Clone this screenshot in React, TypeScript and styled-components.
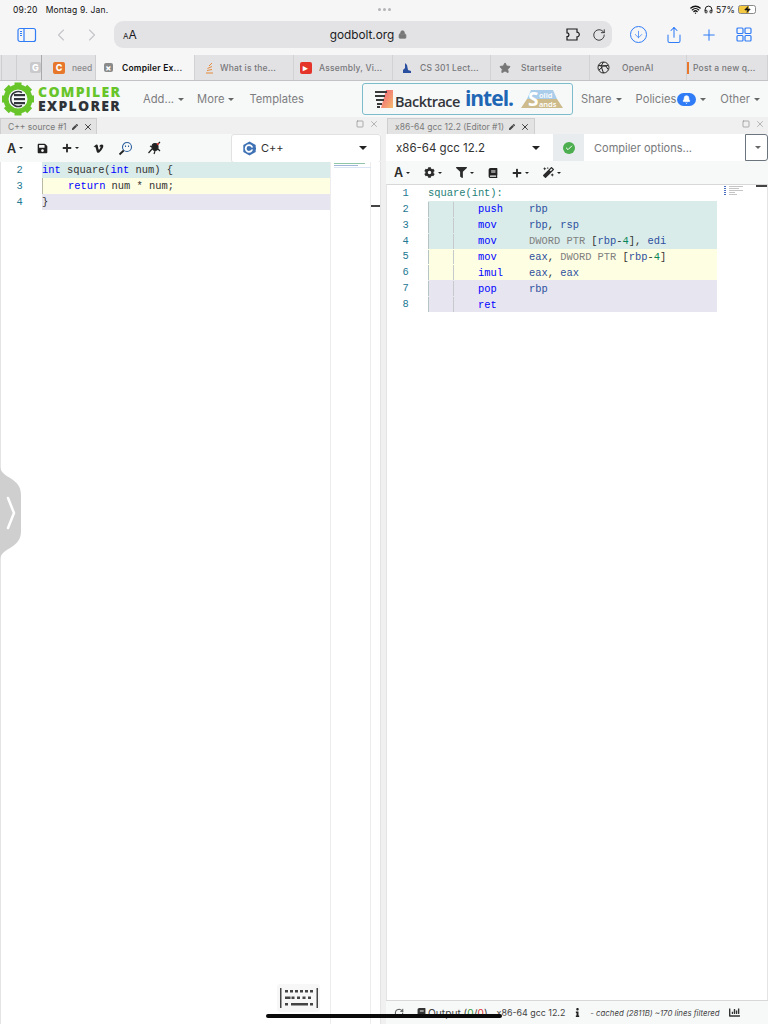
import React from "react";
import styled, { createGlobalStyle } from "styled-components";
import {
  ChevronLeft,
  ChevronRight,
  Lock,
  RotateCw,
  ArrowDown,
  Share,
  Plus,
  Star,
  X,
  Square,
  Check,
  Headphones,
  Wifi,
  Zap,
  Bell,
} from "lucide-react";
import {
  FaBook,
  FaChartBar,
  FaCog,
  FaFilter,
  FaInfo,
  FaMagic,
  FaPen,
  FaPlus,
  FaSave,
  FaVimeoV,
} from "react-icons/fa";

const GlobalStyle = createGlobalStyle`
  html, body { margin: 0; padding: 0; background: #fff; }
  * { box-sizing: border-box; }
`;

const Page = styled.div`
  position: relative;
  width: 768px;
  height: 1024px;
  overflow: hidden;
  display: flex;
  flex-direction: column;
  background: #f6f6f7;
  font-family: Inter, "Liberation Sans", sans-serif;
`;

/* ---------- ipad chrome ---------- */
const StatusBar = styled.div`
  height: 18px;
  display: flex;
  align-items: center;
  padding: 1px 0 0 13px;
  font-size: 8.5px;
  color: #111;
  letter-spacing: 0.2px;
`;
const StatusDate = styled.span`
  margin-left: 8px;
`;
const Dots = styled.div`
  margin-left: 270px;
  display: flex;
  gap: 2px;
  & i {
    width: 3px;
    height: 3px;
    border-radius: 50%;
    background: #b4b4b8;
  }
`;
const StatusRight = styled.div`
  margin-left: auto;
  display: flex;
  align-items: center;
  gap: 3px;
  padding-right: 12px;
`;
const Battery = styled.div`
  width: 18px;
  height: 9px;
  border: 1px solid #888;
  border-radius: 2.5px;
  background: linear-gradient(90deg, #f5c842 62%, #fff 62%);
  display: flex;
  align-items: center;
  justify-content: center;
`;
const Toolbar = styled.div`
  height: 37px;
  display: flex;
  align-items: center;
  padding: 0 16px 4px 17px;
`;
const NavArrows = styled.div`
  display: flex;
  gap: 11px;
  margin-left: 14px;
  color: #c6c6ca;
`;
const AddressBar = styled.div`
  width: 498px;
  height: 27px;
  flex: none;
  margin-left: 12px;
  border-radius: 9px;
  background: #e3e3e5;
  display: grid;
  grid-template-columns: 1fr auto 1fr;
  align-items: center;
  padding: 0 6px 0 9px;
  color: #1c1c1e;
`;
const ReaderA = styled.span`
  font-size: 12px;
  & small {
    font-size: 8px;
  }
`;
const Domain = styled.span`
  display: flex;
  align-items: center;
  gap: 4px;
  margin-left: 8px;
  font-size: 11.8px;
`;
const AddressEnd = styled.div`
  display: flex;
  justify-content: flex-end;
  align-items: center;
  gap: 9px;
`;
const ToolActions = styled.div`
  display: flex;
  align-items: center;
  gap: 17.5px;
  margin-left: 18px;
  color: #2f7cf6;
`;
const DownloadRing = styled.div`
  width: 17px;
  height: 17px;
  border: 1.2px solid #2f7cf6;
  border-radius: 50%;
  display: flex;
  align-items: center;
  justify-content: center;
`;
const TabStrip = styled.div`
  height: 26px;
  display: flex;
  background: #e2e2e4;
  border-bottom: 1px solid #c3c3c5;
`;
const Stub = styled.div<{ $w: number; $dark?: boolean }>`
  width: ${(p) => p.$w}px;
  flex: none;
  display: flex;
  align-items: center;
  gap: 7px;
  padding-left: ${(p) => (p.$w > 30 ? 11 : 0)}px;
  border-right: 1px solid ${(p) => (p.$dark ? "#a9a9ab" : "#cfcfd1")};
  font-size: 8.5px;
  font-weight: 500;
  color: #8a8a8c;
  justify-content: ${(p) => (p.$w === 25 ? "flex-end" : "flex-start")};
`;
const Tab = styled.div<{ $w: number; $active?: boolean; $gap?: number; $pad?: number }>`
  width: ${(p) => p.$w}px;
  flex: none;
  display: flex;
  align-items: center;
  gap: ${(p) => p.$gap ?? 9}px;
  padding-left: ${(p) => p.$pad ?? 8}px;
  border-right: 1px solid #d2d2d4;
  background: ${(p) => (p.$active ? "#f6f6f7" : "transparent")};
  font-size: 8.5px;
  font-weight: ${(p) => (p.$active ? 600 : 500)};
  letter-spacing: 0.2px;
  color: ${(p) => (p.$active ? "#111" : "#77777a")};
  white-space: nowrap;
`;
const Favicon = styled.div<{ $bg: string; $size?: number }>`
  width: ${(p) => p.$size ?? 12}px;
  height: ${(p) => p.$size ?? 12}px;
  flex: none;
  border-radius: 2px;
  background: ${(p) => p.$bg};
  color: #fff;
  font-size: 9px;
  font-weight: 800;
  display: flex;
  align-items: center;
  justify-content: center;
`;
const TabEdgeMark = styled.i`
  width: 2px;
  height: 12px;
  flex: none;
  margin-left: -8px;
  background: #e6772b;
`;

/* ---------- compiler explorer nav ---------- */
const Nav = styled.div`
  height: 36px;
  flex: none;
  display: flex;
  align-items: center;
  background: #f7f9f9;
  padding-left: 2px;
  font-size: 11.2px;
  color: #7d7d7f;
`;
const Logo = styled.div`
  display: flex;
  align-items: center;
  gap: 4px;
  width: 141px;
`;
const LogoText = styled.div`
  font-family: "Open Sans", "Liberation Sans", sans-serif;
  font-weight: 800;
  font-size: 14px;
  letter-spacing: 1.3px;
  color: #2f3338;
  white-space: nowrap;
`;
const LogoLine = styled.div<{ $green?: boolean }>`
  height: 14px;
  line-height: 14px;
  color: ${(p) => (p.$green ? "#67c52a" : "#2f3338")};
`;
const NavItem = styled.span<{ $left?: number }>`
  display: inline-flex;
  align-items: center;
  margin-left: ${(p) => p.$left ?? 0}px;
  white-space: nowrap;
`;
const Caret = styled.i<{ $size?: number; $dark?: boolean }>`
  display: inline-block;
  width: 0;
  height: 0;
  margin-left: ${(p) => (p.$size ? 3 : 4)}px;
  border-left: ${(p) => p.$size ?? 3}px solid transparent;
  border-right: ${(p) => p.$size ?? 3}px solid transparent;
  border-top: ${(p) => p.$size ?? 3}px solid ${(p) => (p.$dark ? "#222" : "#666")};
`;
const Sponsors = styled.div`
  width: 211px;
  height: 32px;
  flex: none;
  margin-left: 58px;
  margin-right: 8px;
  border: 1px solid #7dbccb;
  border-radius: 3px;
  display: flex;
  align-items: center;
  padding-left: 11px;
`;
const BacktraceWord = styled.span`
  margin-left: 1px;
  margin-top: 4px;
  font-family: "Open Sans", "Liberation Sans", sans-serif;
  font-size: 14.5px;
  font-weight: 600;
  letter-spacing: -0.5px;
  color: #33353a;
`;
const IntelWord = styled.span`
  margin-left: 5px;
  margin-top: -3px;
  font-family: "Open Sans", "Liberation Sans", sans-serif;
  font-size: 21px;
  font-weight: 700;
  letter-spacing: -1px;
  color: #1f67b5;
`;
const BellBadge = styled.span`
  width: 19px;
  height: 13px;
  margin-left: 1px;
  border-radius: 7px;
  background: #2f7cf6;
  color: #fff;
  display: inline-flex;
  align-items: center;
  justify-content: center;
`;

/* ---------- panes ---------- */
const Panes = styled.div`
  flex: 1;
  min-height: 0;
  display: flex;
  gap: 5px;
  background: #f0f0f0;
`;
const Pane = styled.div<{ $w: number }>`
  width: ${(p) => p.$w}px;
  flex: none;
  display: flex;
  flex-direction: column;
`;
const TabRow = styled.div`
  height: 17px;
  flex: none;
  display: flex;
  justify-content: space-between;
  align-items: flex-end;
`;
const PaneTab = styled.div<{ $w: number; $left?: number }>`
  width: ${(p) => p.$w}px;
  height: 16px;
  margin-left: ${(p) => p.$left ?? 0}px;
  display: flex;
  align-items: center;
  gap: 5px;
  padding-left: 7px;
  background: #e3e3e3;
  border: 1px solid #cfcfcf;
  border-bottom: none;
  font-size: 8.5px;
  color: #7a7a7a;
  white-space: nowrap;
`;
const WindowIcons = styled.div<{ $right: number }>`
  display: flex;
  align-items: center;
  gap: 5px;
  padding: 0 ${(p) => p.$right}px 5px 0;
  color: #8a8a8a;
`;
const ToolRow = styled.div<{ $h: number }>`
  height: ${(p) => p.$h}px;
  flex: none;
  display: flex;
  align-items: center;
  background: #f7f9f9;
  color: #2b2b2b;
`;
const ToolGroup = styled.div<{ $gap: number; $left: number }>`
  display: flex;
  align-items: center;
  gap: ${(p) => p.$gap}px;
  margin-left: ${(p) => p.$left}px;
`;
const ToolBtn = styled.span`
  display: inline-flex;
  align-items: center;
  font-size: 12.5px;
  font-weight: 600;
  color: #2b2b2b;
`;
const LangSelect = styled.div`
  width: 150px;
  height: 29px;
  margin-left: auto;
  display: flex;
  align-items: center;
  padding: 0 13px 0 10px;
  background: #fff;
  border: 1px solid #e2e2e2;
  border-radius: 3px;
  font-size: 11px;
  color: #333;
`;
const SelectText = styled.span`
  margin-left: 4px;
  flex: 1;
`;
const CompilerSelect = styled.div`
  width: 167px;
  height: 100%;
  display: flex;
  align-items: center;
  justify-content: space-between;
  padding: 0 13px 0 10px;
  background: #fff;
  font-size: 11.5px;
  color: #333;
`;
const StatusCell = styled.div`
  width: 31px;
  height: 100%;
  display: flex;
  align-items: center;
  justify-content: center;
  background: #e9ecef;
`;
const OkDot = styled.div`
  width: 12px;
  height: 12px;
  border-radius: 50%;
  background: #4cae4f;
  color: #fff;
  display: flex;
  align-items: center;
  justify-content: center;
`;
const OptionsInput = styled.div`
  width: 161px;
  height: 100%;
  display: flex;
  align-items: center;
  padding-left: 10px;
  background: #fff;
  font-size: 11px;
  color: #77797c;
`;
const OptionsCaret = styled.div`
  flex: 1;
  height: 100%;
  display: flex;
  align-items: center;
  justify-content: center;
  background: #fff;
  border: 1px solid #6c757d;
  border-radius: 0 3px 3px 0;
`;
const EditorBody = styled.div<{ $border?: boolean }>`
  flex: 1;
  min-height: 0;
  display: flex;
  background: #fff;
  border-top: ${(p) => (p.$border ? "1px solid #d8d8d8" : "none")};
  border-left: 1px solid #e4e4e4;
  border-right: 1px solid #e4e4e4;
`;
const CodeArea = styled.div<{ $w: number }>`
  width: ${(p) => p.$w}px;
  flex: none;
  font-family: "Liberation Mono", "DejaVu Sans Mono", monospace;
  font-size: 10.4px;
  color: #333;
`;
const Line = styled.div`
  height: 15.875px;
  display: flex;
  align-items: center;
`;
const LineNo = styled.span`
  width: 41px;
  flex: none;
  padding-right: 4px;
  text-align: center;
  color: #237893;
`;
const LineCode = styled.span<{ $bg?: string; $mark?: boolean }>`
  flex: 1;
  height: 100%;
  display: flex;
  align-items: center;
  padding-top: 1px;
  background: ${(p) => p.$bg ?? "transparent"};
  border-left: ${(p) => (p.$mark ? "1px solid #b9b9a5" : "none")};
  & > span {
    white-space: pre;
  }
`;
const Mnemonic = styled.span`
  width: 51px;
  margin-left: 24px;
  flex: none;
  color: #0000ff;
`;
const AsmGuide = styled.i`
  width: 26px;
  height: 100%;
  flex: none;
  border-left: 1px solid #b7c4c6;
  border-right: 1px solid #c7cacd;
`;
const Kw = styled.span`
  color: #0000ff;
`;
const Reg = styled.span`
  color: #2d4f9e;
`;
const Mem = styled.span`
  color: #808080;
`;
const Label = styled.span`
  color: #267f78;
`;
const Num = styled.span`
  color: #098658;
`;
const Minimap = styled.div<{ $w: number; $plain?: boolean }>`
  width: ${(p) => p.$w}px;
  flex: none;
  display: flex;
  flex-direction: column;
  gap: 1px;
  padding-top: 1px;
  border-left: ${(p) => (p.$plain ? "none" : "1px solid #ededed")};
  border-right: ${(p) => (p.$plain ? "none" : "1px solid #ededed")};
`;
const MiniLine = styled.div<{ $w: number; $c: string }>`
  width: ${(p) => p.$w}px;
  height: 1px;
  margin-left: 3px;
  background: ${(p) => p.$c};
`;
const MiniRow = styled.div`
  display: flex;
  align-items: center;
  height: 1px;
  margin-left: 7px;
  & i {
    width: 2px;
    height: 1px;
    background: #4a6fc0;
  }
`;
const ScrollCol = styled.div<{ $top: number }>`
  flex: 1;
  padding-top: ${(p) => p.$top}px;
  & i {
    display: block;
    height: 1.5px;
    background: #444;
  }
`;
const StatusFooter = styled.div`
  height: 24px;
  flex: none;
  display: flex;
  align-items: center;
  padding-left: 8px;
  background: #f7f9f9;
  border-top: 1px solid #d8d8d8;
  font-size: 8.9px;
  color: #444;
  white-space: nowrap;
`;
const OutputLabel = styled.span`
  display: inline-flex;
  align-items: center;
  gap: 2px;
  margin-left: 13px;
  font-size: 10.2px;
  & em {
    font-style: normal;
  }
`;
const FooterNote = styled.span`
  margin-left: 8px;
  font-size: 7.8px;
  font-style: italic;
  color: #444;
`;

/* ---------- overlays ---------- */
const SideHandle = styled.div`
  position: absolute;
  left: 0;
  top: 467px;
  width: 22px;
  height: 92px;
`;
const KeyboardKey = styled.div`
  position: absolute;
  left: 277px;
  top: 984px;
  width: 43px;
  height: 28px;
  background: #f7f7f7;
  border-radius: 3px;
  display: flex;
  align-items: center;
  justify-content: center;
`;
const HomeBar = styled.div`
  position: absolute;
  left: 266px;
  top: 1014px;
  width: 236px;
  height: 4px;
  border-radius: 2px;
  background: #0a0a0a;
`;

const GearLogo = () => (
  <svg width="32" height="34" viewBox="0 0 32 34">
    <circle cx="16" cy="17" r="12" fill="none" stroke="#67c52a" strokeWidth="5" />
    {[0, 45, 90, 135, 180, 225, 270, 315].map((a) => (
      <rect key={a} x="12.5" y="0.5" width="7" height="5" fill="#67c52a" transform={`rotate(${a} 16 17)`} />
    ))}
    <path d="M20 10.5A7.5 7.5 0 1 0 20 23.5" fill="none" stroke="#33373b" strokeWidth="1.5" />
    <rect x="12" y="12" width="11" height="2.2" fill="#33373b" />
    <rect x="12" y="16" width="11" height="2.2" fill="#33373b" />
    <rect x="12" y="20" width="11" height="2.2" fill="#33373b" />
  </svg>
);

const BacktraceMark = () => (
  <svg width="20" height="19" viewBox="0 0 20 19">
    <defs>
      <linearGradient id="bt" x1="0" y1="0" x2="1" y2="1">
        <stop offset="0" stopColor="#ee5c7c" />
        <stop offset="1" stopColor="#f7bb6b" />
      </linearGradient>
    </defs>
    <path d="M12 0h7v18H7z" fill="url(#bt)" />
    <path d="M1 1h12v2H1zM1 5h10v2H1zM2 9h8v2H2zM3 13h5v2H3zM3 16h3v2H3z" fill="#3a3a3a" />
  </svg>
);

const SolidSands = () => (
  <svg width="46" height="30" viewBox="0 -5 46 30" style={{ marginLeft: 6 }}>
    <path d="M8 10L12 1h22l4 9z" fill="#a9cdea" />
    <path d="M8 10h30l6 9H2z" fill="#cdbb8c" />
    <text x="9" y="17" fontFamily="Open Sans" fontSize="19" fontWeight="700" fill="#fff">S</text>
    <text x="20" y="9" fontFamily="Open Sans" fontSize="7.5" fontWeight="600" fill="#fff">olid</text>
    <text x="20" y="17.5" fontFamily="Open Sans" fontSize="7.5" fontWeight="600" fill="#fff">ands</text>
  </svg>
);

const SidebarIcon = () => (
  <svg width="20" height="16" viewBox="0 0 20 16" fill="none" stroke="#2f7cf6" strokeWidth="1.2">
    <rect x="1" y="1.5" width="17.5" height="13" rx="2" />
    <path d="M7 1.5v13" />
    <path d="M3 4.5h2M3 6.5h2M3 8.5h2" strokeWidth="1" />
  </svg>
);

const TabsIcon = () => (
  <svg width="16" height="15" viewBox="0 0 16 15" fill="none" stroke="#2f7cf6" strokeWidth="1.2">
    <rect x="1" y="1" width="6" height="5.5" rx="1" />
    <rect x="9" y="1" width="6" height="5.5" rx="1" />
    <rect x="1" y="8.5" width="6" height="5.5" rx="1" />
    <rect x="9" y="8.5" width="6" height="5.5" rx="1" />
  </svg>
);

const PuzzleIcon = () => (
  <svg width="17" height="13" viewBox="0 0 17 13" fill="none" stroke="#1c1c1e" strokeWidth="1.2">
    <path d="M1 1h10v3.2a1.8 1.8 0 1 1 0 4.6V12H1V8.6a1.6 1.6 0 1 0 0-3.8z" />
  </svg>
);

const ChatGptIcon = () => (
  <svg width="13" height="13" viewBox="0 0 13 13" fill="none" stroke="#222" strokeWidth="1">
    <circle cx="6.5" cy="6.5" r="5.5" />
    <path d="M6.5 1L4 5l2.5 7M1.5 4.5L9 5l2 3.5M2 9l4.5-4 4.5-.5" />
  </svg>
);

const CppBadge = () => (
  <svg width="15" height="15" viewBox="0 0 15 15">
    <path d="M7.5.5l6.2 3.5v7l-6.2 3.5L1.3 11V4z" fill="#3f72b5" />
    <circle cx="7" cy="7.5" r="3.3" fill="none" stroke="#fff" strokeWidth="1.8" />
    <path d="M9 6.5h5v2H9z" fill="#3f72b5" />
  </svg>
);

const ZoomFace = () => (
  <svg width="15" height="15" viewBox="0 0 15 15" fill="none" stroke="#2b5f9e" strokeWidth="1.1">
    <circle cx="9" cy="6" r="4.5" />
    <path d="M5.7 9.5L1.5 13.5" strokeWidth="1.8" stroke="#222" />
    <path d="M7.5 4.5v1.5M10.5 4.5v1.5" />
  </svg>
);

const BugIcon = () => (
  <svg width="15" height="14" viewBox="0 0 15 14" fill="none" stroke="#222" strokeWidth="1.2">
    <ellipse cx="8" cy="6" rx="3" ry="3.5" fill="#222" />
    <path d="M5 8L1.5 12M3 5l2 1M11 3l2-2M11 8l2 2M8 10l-1 3" />
    <circle cx="11" cy="3" r="1" fill="#d33" stroke="none" />
  </svg>
);

const KeyboardGlyph = () => (
  <svg width="38" height="20" viewBox="0 0 38 20" fill="#444">
    <rect x="0" y="0" width="1.5" height="20" />
    <rect x="36.5" y="0" width="1.5" height="20" />
    {[0, 1, 2, 3, 4, 5].map((i) => (
      <rect key={`a${i}`} x={5 + i * 5} y="2" width="3" height="2.5" />
    ))}
    {[0, 1, 2, 3, 4].map((i) => (
      <rect key={`b${i}`} x={i === 0 ? 5 : 6 + i * 5.5} y="8.5" width={i === 0 ? 5.5 : 3} height="2.5" />
    ))}
    <rect x="5" y="15" width="3" height="2.5" />
    <rect x="11" y="15" width="17" height="2.5" />
    <rect x="30" y="15" width="3" height="2.5" />
  </svg>
);

const ToolCaret = () => <Caret $size={2.5} $dark />;

const asmLines = [
  { n: 2, bg: "#d9ecea", m: "push", ops: <Reg>rbp</Reg> },
  {
    n: 3,
    bg: "#d9ecea",
    m: "mov",
    ops: (
      <>
        <Reg>rbp</Reg>, <Reg>rsp</Reg>
      </>
    ),
  },
  {
    n: 4,
    bg: "#d9ecea",
    m: "mov",
    ops: (
      <>
        <Mem>DWORD PTR</Mem> [<Reg>rbp</Reg>-<Num>4</Num>], <Reg>edi</Reg>
      </>
    ),
  },
  {
    n: 5,
    bg: "#fefee3",
    m: "mov",
    ops: (
      <>
        <Reg>eax</Reg>, <Mem>DWORD PTR</Mem> [<Reg>rbp</Reg>-<Num>4</Num>]
      </>
    ),
  },
  {
    n: 6,
    bg: "#fefee3",
    m: "imul",
    ops: (
      <>
        <Reg>eax</Reg>, <Reg>eax</Reg>
      </>
    ),
  },
  { n: 7, bg: "#e6e5f0", m: "pop", ops: <Reg>rbp</Reg> },
  { n: 8, bg: "#e6e5f0", m: "ret", ops: null },
];

const App = () => {
  return (
    <Page>
      <GlobalStyle />
      <StatusBar>
        <span>09:20</span>
        <StatusDate>Montag 9. Jan.</StatusDate>
        <Dots>
          <i />
          <i />
          <i />
        </Dots>
        <StatusRight>
          <Wifi size={11} strokeWidth={3} color="#111" />
          <Headphones size={9} strokeWidth={2.5} color="#111" />
          <span>57%</span>
          <Battery>
            <Zap size={7} fill="#111" color="#111" />
          </Battery>
        </StatusRight>
      </StatusBar>

      <Toolbar>
        <SidebarIcon />
        <NavArrows>
          <ChevronLeft size={20} strokeWidth={1.4} />
          <ChevronRight size={20} strokeWidth={1.4} />
        </NavArrows>
        <AddressBar>
          <ReaderA>
            <small>A</small>A
          </ReaderA>
          <Domain>
            godbolt.org <Lock size={9} fill="#777" color="#777" />
          </Domain>
          <AddressEnd>
            <PuzzleIcon />
            <RotateCw size={14} strokeWidth={1.4} color="#1c1c1e" />
          </AddressEnd>
        </AddressBar>
        <ToolActions>
          <DownloadRing>
            <ArrowDown size={11} strokeWidth={1.6} />
          </DownloadRing>
          <Share size={18} strokeWidth={1.4} />
          <Plus size={18} strokeWidth={1.4} />
          <TabsIcon />
        </ToolActions>
      </Toolbar>

      <TabStrip>
        <Stub $w={2} />
        <Stub $w={15} />
        <Stub $w={25} $dark>
          <Favicon $bg="#c9c9cb" $size={11}>G</Favicon>
        </Stub>
        <Stub $w={54}>
          <Favicon $bg="#e6772b">C</Favicon>
          need
        </Stub>
        <Tab $w={99} $active $gap={9}>
          <Favicon $bg="#8a8a8a" $size={9}>×</Favicon>
          Compiler Ex...
        </Tab>
        <Tab $w={99} $gap={5}>
          <Favicon $bg="transparent" $size={12}>
            <svg width="11" height="12" viewBox="0 0 11 12" fill="none" stroke="#e58a3c" strokeWidth="1">
              <path d="M2 11h7M3 8.5l5-1M3.5 6.5l4.5-2M5 4l3-3" />
            </svg>
          </Favicon>
          What is the...
        </Tab>
        <Tab $w={99} $gap={7} $pad={6}>
          <Favicon $bg="#e5342a" $size={12}>▸</Favicon>
          Assembly, Vi...
        </Tab>
        <Tab $w={98} $gap={7} $pad={8}>
          <Favicon $bg="transparent" $size={12}>
            <svg width="11" height="12" viewBox="0 0 11 12" fill="#2a4f9e">
              <path d="M3 1l2 2 1 5 3 1v2H1V8l2-2z" />
            </svg>
          </Favicon>
          CS 301 Lect...
        </Tab>
        <Tab $w={99} $gap={10}>
          <Star size={12} fill="#777" color="#777" />
          Startseite
        </Tab>
        <Tab $w={97} $gap={12} $pad={7}>
          <ChatGptIcon />
          OpenAI
        </Tab>
        <Tab $w={81} $gap={4}>
          <TabEdgeMark />
          Post a new q...
        </Tab>
      </TabStrip>

      <Nav>
        <Logo>
          <GearLogo />
          <LogoText>
            <LogoLine $green>COMPILER</LogoLine>
            <LogoLine>EXPLORER</LogoLine>
          </LogoText>
        </Logo>
        <NavItem>
          Add...
          <Caret />
        </NavItem>
        <NavItem $left={13}>
          More
          <Caret />
        </NavItem>
        <NavItem $left={15}>Templates</NavItem>
        <Sponsors>
          <BacktraceMark />
          <BacktraceWord>Backtrace</BacktraceWord>
          <IntelWord>intel.</IntelWord>
          <SolidSands />
        </Sponsors>
        <NavItem>
          Share
          <Caret />
        </NavItem>
        <NavItem $left={14}>
          Policies
          <BellBadge>
            <Bell size={9} fill="#fff" />
          </BellBadge>
          <Caret />
        </NavItem>
        <NavItem $left={14}>
          Other
          <Caret />
        </NavItem>
      </Nav>

      <Panes>
        <Pane $w={381}>
          <TabRow>
            <PaneTab $w={97}>
              C++ source #1
              <FaPen size={6} color="#444" />
              <X size={10} color="#222" />
            </PaneTab>
            <WindowIcons $right={2}>
              <Square size={8} />
              <X size={10} strokeWidth={1.4} />
            </WindowIcons>
          </TabRow>
          <ToolRow $h={28}>
            <ToolGroup $gap={14} $left={7}>
              <ToolBtn>
                A<ToolCaret />
              </ToolBtn>
              <FaSave size={11} color="#222" />
              <ToolBtn>
                <FaPlus size={10} />
                <ToolCaret />
              </ToolBtn>
              <FaVimeoV size={11} color="#222" />
              <ZoomFace />
              <BugIcon />
            </ToolGroup>
            <LangSelect>
              <CppBadge />
              <SelectText>C++</SelectText>
              <Caret $size={4} $dark />
            </LangSelect>
          </ToolRow>
          <EditorBody>
            <CodeArea $w={329}>
              <Line>
                <LineNo>2</LineNo>
                <LineCode $bg="#d9ecea">
                  <span>
                    <Kw>int</Kw> square(<Kw>int</Kw> num) {"{"}
                  </span>
                </LineCode>
              </Line>
              <Line>
                <LineNo>3</LineNo>
                <LineCode $bg="#fefee3" $mark>
                  <span>
                    {"    "}
                    <Kw>return</Kw> num * num;
                  </span>
                </LineCode>
              </Line>
              <Line>
                <LineNo>4</LineNo>
                <LineCode $bg="#e6e5f0">
                  <span>{"}"}</span>
                </LineCode>
              </Line>
            </CodeArea>
            <Minimap $w={41}>
              <MiniLine $w={31} $c="#8fc7a6" />
              <MiniLine $w={24} $c="#9fb6d8" />
              <MiniLine $w={37} $c="#d9e4f5" />
            </Minimap>
            <ScrollCol $top={43}>
              <i />
            </ScrollCol>
          </EditorBody>
        </Pane>

        <Pane $w={382}>
          <TabRow>
            <PaneTab $w={148} $left={1}>
              x86-64 gcc 12.2 (Editor #1)
              <FaPen size={6} color="#444" />
              <X size={10} color="#222" />
            </PaneTab>
            <WindowIcons $right={3}>
              <Square size={8} />
              <X size={10} strokeWidth={1.4} />
            </WindowIcons>
          </TabRow>
          <ToolRow $h={27}>
            <CompilerSelect>
              x86-64 gcc 12.2
              <Caret $size={4} $dark />
            </CompilerSelect>
            <StatusCell>
              <OkDot>
                <Check size={8} strokeWidth={3} />
              </OkDot>
            </StatusCell>
            <OptionsInput>Compiler options...</OptionsInput>
            <OptionsCaret>
              <Caret $size={3} />
            </OptionsCaret>
          </ToolRow>
          <ToolRow $h={23}>
            <ToolGroup $gap={14} $left={8}>
              <ToolBtn>
                A<ToolCaret />
              </ToolBtn>
              <ToolBtn>
                <FaCog size={11} />
                <ToolCaret />
              </ToolBtn>
              <ToolBtn>
                <FaFilter size={11} />
                <ToolCaret />
              </ToolBtn>
              <FaBook size={10} color="#222" />
              <ToolBtn>
                <FaPlus size={10} />
                <ToolCaret />
              </ToolBtn>
              <ToolBtn>
                <FaMagic size={11} />
                <ToolCaret />
              </ToolBtn>
            </ToolGroup>
          </ToolRow>
          <EditorBody $border>
            <CodeArea $w={330}>
              <Line>
                <LineNo>1</LineNo>
                <LineCode>
                  <Label>square(int):</Label>
                </LineCode>
              </Line>
              {asmLines.map((l) => (
                <Line key={l.n}>
                  <LineNo>{l.n}</LineNo>
                  <LineCode $bg={l.bg}>
                    <AsmGuide />
                    <Mnemonic>{l.m}</Mnemonic>
                    <span>{l.ops}</span>
                  </LineCode>
                </Line>
              ))}
            </CodeArea>
            <Minimap $w={39} $plain>
              {[14, 10, 14, 6, 8].map((w, i) => (
                <MiniRow key={i}>
                  <i />
                  <MiniLine $w={w} $c="#c5c5c5" />
                </MiniRow>
              ))}
            </Minimap>
            <ScrollCol $top={0}>
              <i />
            </ScrollCol>
          </EditorBody>
          <StatusFooter>
            <RotateCw size={10} color="#333" />
            <OutputLabel>
              <FaBook size={9} color="#333" />
              <span>
                Output (<em style={{ color: "#3a9a3a" }}>0</em>/<em style={{ color: "#d33" }}>0</em>)
              </span>
            </OutputLabel>
            <NavItem $left={9}>x86-64 gcc 12.2</NavItem>
            <NavItem $left={8}>
              <FaInfo size={9} color="#222" />
            </NavItem>
            <FooterNote>- cached (2811B) ~170 lines filtered</FooterNote>
            <NavItem $left={9}>
              <FaChartBar size={11} color="#333" />
            </NavItem>
          </StatusFooter>
        </Pane>
      </Panes>

      <SideHandle>
        <svg width="22" height="92" viewBox="0 0 22 92">
          <path d="M0 0C2 12 21 10 21 28V64C21 82 2 80 0 92Z" fill="#cfcfcf" />
          <path d="M8 31L14 46L8 61" fill="none" stroke="#fff" strokeWidth="2.5" strokeLinecap="round" />
        </svg>
      </SideHandle>
      <KeyboardKey>
        <KeyboardGlyph />
      </KeyboardKey>
      <HomeBar />
    </Page>
  );
};

export default App;
